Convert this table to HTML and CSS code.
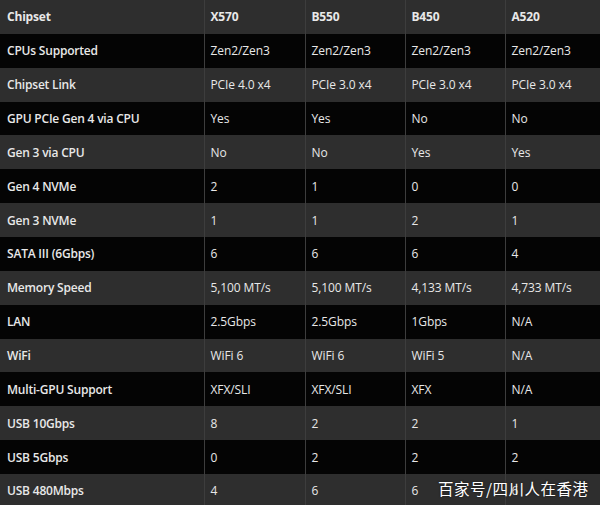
FILE: index.html
```html
<!DOCTYPE html>
<html>
<head>
<meta charset="utf-8">
<link rel="stylesheet" href="styles.css">
</head>
<body>
<div class="wrap">
<table class="spec">
<colgroup><col class="c1"><col class="c2"><col class="c3"><col class="c4"><col class="c5"></colgroup>
<tr class="head"><th>Chipset</th><th>X570</th><th>B550</th><th>B450</th><th>A520</th></tr>
<tr><th>CPUs Supported</th><td>Zen2/Zen3</td><td>Zen2/Zen3</td><td>Zen2/Zen3</td><td>Zen2/Zen3</td></tr>
<tr><th>Chipset Link</th><td>PCIe 4.0 x4</td><td>PCIe 3.0 x4</td><td>PCIe 3.0 x4</td><td>PCIe 3.0 x4</td></tr>
<tr><th>GPU PCIe Gen 4 via CPU</th><td>Yes</td><td>Yes</td><td>No</td><td>No</td></tr>
<tr><th>Gen 3 via CPU</th><td>No</td><td>No</td><td>Yes</td><td>Yes</td></tr>
<tr><th>Gen 4 NVMe</th><td>2</td><td>1</td><td>0</td><td>0</td></tr>
<tr><th>Gen 3 NVMe</th><td>1</td><td>1</td><td>2</td><td>1</td></tr>
<tr><th>SATA III (6Gbps)</th><td>6</td><td>6</td><td>6</td><td>4</td></tr>
<tr><th>Memory Speed</th><td>5,100 MT/s</td><td>5,100 MT/s</td><td>4,133 MT/s</td><td>4,733 MT/s</td></tr>
<tr><th>LAN</th><td>2.5Gbps</td><td>2.5Gbps</td><td>1Gbps</td><td>N/A</td></tr>
<tr><th>WiFi</th><td>WiFi 6</td><td>WiFi 6</td><td>WiFi 5</td><td>N/A</td></tr>
<tr><th>Multi-GPU Support</th><td>XFX/SLI</td><td>XFX/SLI</td><td>XFX</td><td>N/A</td></tr>
<tr><th>USB 10Gbps</th><td>8</td><td>2</td><td>2</td><td>1</td></tr>
<tr><th>USB 5Gbps</th><td>0</td><td>2</td><td>2</td><td>2</td></tr>
<tr><th>USB 480Mbps</th><td>4</td><td>6</td><td>6</td><td>6</td></tr>
</table>
<div class="mark">百家号/四川人在香港</div>
</div>
</body>
</html>
```
FILE: styles.css
```css
html, body {
  margin: 0;
  padding: 0;
  background: #050505;
  overflow: hidden;
}
.wrap {
  position: relative;
  width: 600px;
  height: 505px;
  overflow: hidden;
}
.spec {
  border-collapse: collapse;
  table-layout: fixed;
  width: 600px;
  font-family: "Open Sans", "Noto Sans", sans-serif;
  font-size: 12px;
  color: #e8e8e8;
}
.c1 { width: 204px; }
.c2 { width: 101px; }
.c3 { width: 100px; }
.c4 { width: 100px; }
.c5 { width: 95px; }
.spec tr {
  height: 33.86px;
}
.spec tr:nth-child(odd) { background: #2e2e2e; }
.spec tr:nth-child(even) { background: #040404; }
.spec th, .spec td {
  padding: 0 0 0 6px;
  text-align: left;
  vertical-align: middle;
  white-space: nowrap;
  border-left: 1px solid #3d3d3d;
}
.spec th:first-child { border-left: none; padding-left: 7px; }
.spec th { font-weight: 600; letter-spacing: -0.2px; }
.spec td { font-weight: 400; letter-spacing: -0.1px; }
.spec tr.head th { font-weight: 700; }
.mark {
  position: absolute;
  left: 438px;
  top: 477px;
  font-family: "Noto Sans CJK SC", sans-serif;
  font-size: 15.5px;
  color: #ffffff;
  text-shadow: 0 0 2px rgba(0,0,0,0.6);
  letter-spacing: 0.5px;
}
```
